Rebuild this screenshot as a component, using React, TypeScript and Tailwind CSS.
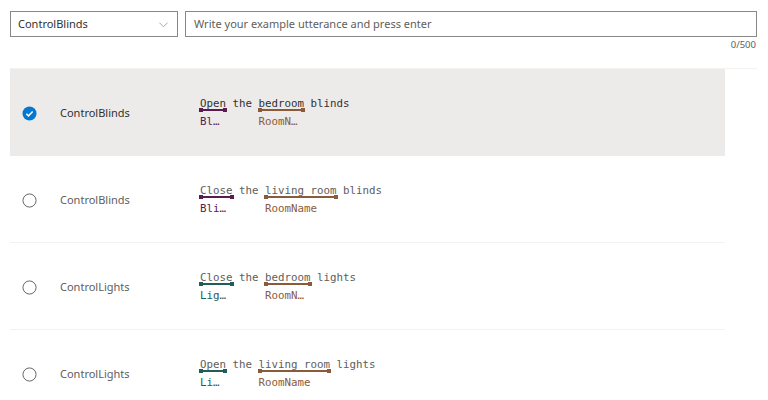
import React from "react";

type Tok = { text: string; entity?: { color: string; label: string } };

const BLINDS = "#5c1a4f";
const ROOM = "#8a5b3a";
const LIGHTS = "#1f5c5a";

const rows: { intent: string; selected: boolean; tokens: Tok[] }[] = [
  {
    intent: "ControlBlinds",
    selected: true,
    tokens: [
      { text: "Open", entity: { color: BLINDS, label: "Bl…" } },
      { text: " the " },
      { text: "bedroom", entity: { color: ROOM, label: "RoomN…" } },
      { text: " blinds" },
    ],
  },
  {
    intent: "ControlBlinds",
    selected: false,
    tokens: [
      { text: "Close", entity: { color: BLINDS, label: "Bli…" } },
      { text: " the " },
      { text: "living room", entity: { color: ROOM, label: "RoomName" } },
      { text: " blinds" },
    ],
  },
  {
    intent: "ControlLights",
    selected: false,
    tokens: [
      { text: "Close", entity: { color: LIGHTS, label: "Lig…" } },
      { text: " the " },
      { text: "bedroom", entity: { color: ROOM, label: "RoomN…" } },
      { text: " lights" },
    ],
  },
  {
    intent: "ControlLights",
    selected: false,
    tokens: [
      { text: "Open", entity: { color: LIGHTS, label: "Li…" } },
      { text: " the " },
      { text: "living room", entity: { color: ROOM, label: "RoomName" } },
      { text: " lights" },
    ],
  },
];

function Radio({ checked }: { checked: boolean }) {
  if (checked) {
    return (
      <svg width="15" height="15" viewBox="0 0 16 16">
        <circle cx="8" cy="8" r="7.5" fill="#0078d4" />
        <path d="M4.6 8.2l2.3 2.3 4.5-4.6" fill="none" stroke="#fff" strokeWidth="1.6" />
      </svg>
    );
  }
  return (
    <svg width="15" height="15" viewBox="0 0 16 16">
      <circle cx="8" cy="8" r="7" fill="none" stroke="#605e5c" strokeWidth="1" />
    </svg>
  );
}

function Utterance({ tokens, selected }: { tokens: Tok[]; selected: boolean }) {
  return (
    <div
      className={`flex items-start whitespace-pre text-[10.8px] leading-[14px] ${selected ? "text-[#323130]" : "text-[#605e5c]"}`}
      style={{ fontFamily: '"DejaVu Sans Mono", "Liberation Mono", monospace' }}
    >
      {tokens.map((t, i) =>
        t.entity ? (
          <div key={i} className="flex flex-col">
            <span>{t.text}</span>
            <div className="relative -mt-[2px] h-[2px]" style={{ backgroundColor: t.entity.color }}>
              <span className="absolute -left-[1px] -top-[1px] h-[4px] w-[4px]" style={{ backgroundColor: t.entity.color }} />
              <span className="absolute -right-[1px] -top-[1px] h-[4px] w-[4px]" style={{ backgroundColor: t.entity.color }} />
            </div>
            <span className="mt-[4px] text-[10.8px] leading-[14px]" style={{ color: t.entity.color }}>
              {t.entity.label}
            </span>
          </div>
        ) : (
          <span key={i}>{t.text}</span>
        )
      )}
    </div>
  );
}

export default function App() {
  return (
    <div className="h-[400px] w-[768px] overflow-hidden bg-white" style={{ fontFamily: '"Noto Sans", "Open Sans", sans-serif' }}>
      <div className="flex gap-[7px] pl-[10px] pr-[11px] pt-[11px]">
        <div className="flex h-[26px] w-[168px] items-center justify-between border border-[#8a8886] pl-[7px] pr-[8px] text-[11px] text-[#323130]">
          <span>ControlBlinds</span>
          <svg width="11" height="11" viewBox="0 0 12 12">
            <path d="M1.5 4l4.5 4.5L10.5 4" fill="none" stroke="#a19f9d" strokeWidth="1" />
          </svg>
        </div>
        <div className="flex h-[26px] flex-1 items-center border border-[#8a8886] px-[8px] text-[11px] text-[#605e5c]">
          Write your example utterance and press enter
        </div>
      </div>
      <div className="pr-[12px] pt-[1px] text-right text-[9.5px] leading-[14px] text-[#605e5c]">0/500</div>
      <div className="ml-[10px] mt-[16px] w-[747px] border-t border-[#f3f2f1]">
        {rows.map((r, i) => (
          <div
            key={i}
            className={`flex h-[87px] w-[715px] items-center border-b ${r.selected ? "border-transparent bg-[#edebe9]" : "border-[#f3f2f1]"}`}
          >
            <div className="flex w-[50px] pl-[12px] pt-[2px]">
              <Radio checked={r.selected} />
            </div>
            <div className={`w-[140px] pt-[2px] text-[11px] ${r.selected ? "text-[#323130]" : "text-[#605e5c]"}`}>{r.intent}</div>
            <div className="pt-[1px]">
              <Utterance tokens={r.tokens} selected={r.selected} />
            </div>
          </div>
        ))}
      </div>
    </div>
  );
}
